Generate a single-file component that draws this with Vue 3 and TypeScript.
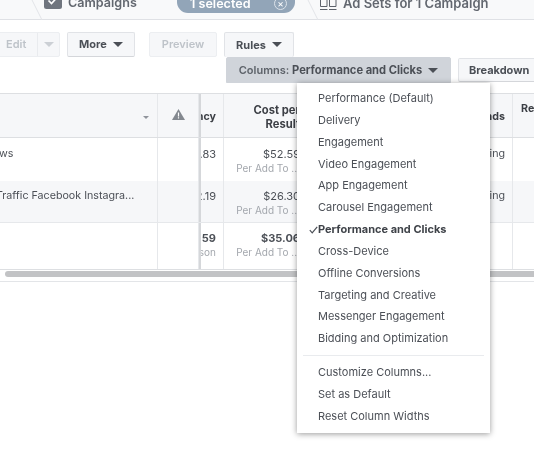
<script setup lang="ts">
const menuA = ['Performance (Default)', 'Delivery', 'Engagement', 'Video Engagement', 'App Engagement', 'Carousel Engagement', 'Performance and Clicks', 'Cross-Device', 'Offline Conversions', 'Targeting and Creative', 'Messenger Engagement', 'Bidding and Optimization']
const menuB = ['Customize Columns...', 'Set as Default', 'Reset Column Widths']
const rows = [
  { name: 'News', freq: '1.83', cost: '$52.59', sub: 'Per Add To ...', last: 'Learning', kind: 'first', note: '' },
  { name: 'Traffic Facebook Instagra...', freq: '2.19', cost: '$26.30', sub: 'Per Add To ...', last: 'Learning', kind: 'alt', note: '' },
  { name: '', freq: '1.59', cost: '$35.06', sub: 'Per Add To ...', last: '', kind: 'total', note: 'Per Person' },
]
</script>

<template>
  <div class="page">
    <div class="tabs">
      <div class="tab first">
        <svg class="check" width="18" height="14" viewBox="0 0 18 14"><rect x="0" y="-4" width="18" height="17" rx="2.5" fill="#6f757e"/><path d="M4.5 4.5l3 3 6-6.5" fill="none" stroke="#fff" stroke-width="1.6"/></svg>
        <span>Campaigns</span>
      </div>
      <div class="pill"><span>1 selected</span><i class="close">×</i></div>
      <div class="tab third">
        <svg width="17" height="11" viewBox="0 0 17 11"><path d="M.5 0v6.5h6.5V0M9.5 0v6.5h6.5V0" fill="none" stroke="#5c626b"/><path d="M0 9.5h7.5M9 9.5h7.5" stroke="#5c626b"/></svg>
        <span>Ad Sets for 1 Campaign</span>
      </div>
      <svg class="slash" width="12" height="20" viewBox="0 0 12 20"><path d="M1 0l10 20" stroke="#e2e4e8" fill="none"/></svg>
      <svg class="slash two" width="12" height="20" viewBox="0 0 12 20"><path d="M1 0l10 20" stroke="#e2e4e8" fill="none"/></svg>
    </div>

    <div class="toolbar">
      <div class="tools-left">
        <div class="btn off edit"><span>Edit</span><i class="split"><b class="caret faint"></b></i></div>
        <div class="btn more">More<b class="caret"></b></div>
        <div class="btn off preview">Preview</div>
      </div>
      <div class="tools-right">
        <div class="btn rules">Rules<b class="caret"></b></div>
        <div class="tools-row">
          <div class="btn columns">Columns:&nbsp;<strong>Performance and Clicks</strong><b class="caret"></b></div>
          <div class="btn breakdown">Breakdown<b class="caret"></b></div>
        </div>
      </div>
    </div>

    <div class="table">
      <div class="row head">
        <div class="cell name"><b class="sort"></b></div>
        <div class="cell warn">
          <svg width="13" height="11" viewBox="0 0 13 11"><path d="M6.5 0L13 11H0z" fill="#83888f"/><path d="M6.5 3.5v4M6.5 8.3v1.2" stroke="#fff" stroke-width="1.2"/></svg>
        </div>
        <div class="cell freq">Frequency</div>
        <div class="cell cost"><div>Cost per<br>Result</div></div>
        <div class="cell mid">Ends</div>
        <div class="cell last">Results</div>
      </div>
      <div v-for="r in rows" :key="r.cost" class="row body" :class="r.kind">
        <div class="cell name"><span>{{ r.name }}</span></div>
        <div class="cell warn"></div>
        <div class="cell freq"><div class="stack"><span class="val">{{ r.freq }}</span><span class="sub">{{ r.note }}</span></div></div>
        <div class="cell cost"><div class="stack"><span class="val">{{ r.cost }}</span><span class="sub">{{ r.sub }}</span></div></div>
        <div class="cell mid"><span>{{ r.last }}</span></div>
        <div class="cell last"></div>
      </div>
    </div>
    <div class="scroll"><div class="thumb"></div></div>

    <div class="menu">
      <div class="group">
        <div v-for="m in menuA" :key="m" class="item" :class="{ on: m === 'Performance and Clicks' }">
          <svg v-if="m === 'Performance and Clicks'" class="tick" width="9" height="8" viewBox="0 0 9 8"><path d="M.8 4.2l2.4 2.6L8.2.8" fill="none" stroke="#4b4f56" stroke-width="1.2"/></svg>
          {{ m }}
        </div>
      </div>
      <div class="sep"></div>
      <div class="group">
        <div v-for="m in menuB" :key="m" class="item">{{ m }}</div>
      </div>
    </div>
  </div>
</template>

<style>
html, body { margin: 0; background: #fff; }
</style>

<style scoped>
.page {
  position: relative;
  width: 534px;
  height: 462px;
  overflow: hidden;
  background: #fff;
  font-family: Inter, "Liberation Sans", sans-serif;
  font-size: 10.7px;
  color: #4b4f56;
  filter: blur(0.35px);
}
.tabs {
  position: relative;
  height: 20px;
  box-sizing: border-box;
  border-bottom: 1px solid #dfe1e5;
  background: #f8f9fa;
  display: flex;
  align-items: flex-end;
  font-size: 12.6px;
  font-weight: 600;
  color: #62676f;
  line-height: 14px;
}
.tab { display: flex; align-items: center; gap: 6px; height: 14px; margin-bottom: 9px; }
.tab.first { margin-left: 44px; width: 133px; }
.check { margin-top: -1px; }
.pill {
  width: 118px;
  height: 14px;
  margin-bottom: 6px;
  box-sizing: border-box;
  padding: 0 8px 3px 13px;
  background: #92a5b8;
  border-radius: 0 0 11px 11px;
  color: #fff;
  display: flex;
  justify-content: space-between;
  align-items: flex-end;
  line-height: 12px;
}
.close {
  width: 13px; height: 13px; box-sizing: border-box; border: 1px solid #dbe2e9; border-radius: 50%;
  font-style: normal; font-size: 10px; line-height: 11px; text-align: center; font-weight: 400;
}
.tab.third { margin-left: 25px; gap: 6px; font-size: 13px; }
.tab.third svg { margin-top: 5px; }
.slash { position: absolute; left: 31px; top: 0; }
.slash.two { left: 307px; }

.toolbar {
  height: 74px;
  box-sizing: border-box;
  border-bottom: 1px solid #dddfe2;
  display: flex;
  padding-top: 12px;
  font-weight: 600;
}
.tools-left { display: flex; align-items: flex-start; gap: 7px; margin-left: -5px; }
.tools-left .preview { margin-left: 7px; }
.tools-right { display: flex; flex-direction: column; align-items: flex-start; margin-left: 7px; }
.tools-row { display: flex; gap: 7px; margin-left: 2px; }
.btn {
  height: 25px;
  box-sizing: border-box;
  padding-bottom: 1px;
  display: flex;
  align-items: center;
  justify-content: center;
  border: 1px solid #e1e3e7;
  border-bottom-color: #d4d6da;
  border-radius: 2px;
  background: #f6f7f9;
  color: #4b4f56;
  white-space: nowrap;
  font-size: 11px;
  font-weight: 700;
}
.btn.off { background: #f6f7f9; color: #bec3c9; border-color: #eceef1; font-weight: 600; }
.edit { width: 65px; padding-left: 5px; justify-content: space-between; }
.edit span { margin-left: 5px; }
.split { width: 21px; height: 23px; border-left: 1px solid #e9ebee; display: flex; align-items: center; justify-content: center; }
.more { width: 68px; }
.preview { width: 68px; }
.rules { width: 70px; border-bottom: 0; height: 25px; }
.columns { width: 225px; height: 26px; padding: 0; background: #d0d4da; border-color: #d0d4da; border-radius: 2px 2px 0 0; font-weight: 600; color: #5d6269; }
.columns strong { font-weight: 700; color: #4b4f56; font-size: 11.15px; }
.breakdown { width: 90px; height: 24px; margin-top: 1px; justify-content: flex-start; padding: 0 0 0 10px; flex: none; }
.caret {
  display: inline-block;
  margin-left: 6px;
  border-left: 5px solid transparent;
  border-right: 5px solid transparent;
  border-top: 5px solid #4b4f56;
}
.caret.faint { margin: 0; border-top-color: #ccd0d5; }

.table { border-bottom: 1px solid #dddfe2; }
.row {
  display: grid;
  grid-template-columns: 158px 41px 25px 83px 206px 21px;
  width: 534px;
  overflow: hidden;
  box-sizing: border-box;
}
.row.head { height: 44px; background: #f6f7f9; font-weight: 700; color: #3c3f45; border-bottom: 1px solid #dddfe2; }
.row.first { height: 43px; }
.row.alt { background: #f6f7f9; height: 42px; border-bottom: 1px solid #e6e8eb; }
.row.total { height: 46px; }
.cell {
  box-sizing: border-box;
  overflow: hidden;
  border-right: 1px solid #e6e8eb;
  display: flex;
  justify-content: flex-end;
  white-space: nowrap;
}
.head .cell { align-items: center; line-height: 14px; padding-top: 2px; }
.body .cell { padding-top: 8px; line-height: 14px; }
.first .cell { padding-top: 9px; }
.name { padding-right: 8px; }
.head .cell.name { padding-top: 3px; }
.body .name { justify-content: flex-start; padding-right: 0; }
.first .name span { margin-left: -15px; }
.alt .name span { margin-left: -4px; }
.sort {
  border-left: 3px solid transparent;
  border-right: 3px solid transparent;
  border-top: 3px solid #90949c;
}
.warn { justify-content: center; }
.head .cell.warn { padding: 0 0 2px; }
.freq {
  border-left: 2px solid #d5d7da;
  padding-right: 7px;
}
.cost { padding-right: 6px; }
.head .cost { text-align: right; font-size: 11.2px; }
.mid { padding-right: 7px; }
.last { border-right: 0; justify-content: flex-start; padding-left: 8px; }
.head .cell.last { align-items: flex-start; padding-top: 8px; }
.stack { display: flex; flex-direction: column; align-items: flex-end; }
.val { font-size: 11px; }
.sub { color: #a3a7ad; font-size: 10px; line-height: 14px; }
.total .val { font-weight: 700; }

.scroll { height: 10px; padding-top: 1px; border-bottom: 1px solid #e3e5e8; }
.thumb { width: 534px; margin-left: 5px; height: 6px; border-radius: 3px; background: #c2c3c5; }

.menu {
  position: absolute;
  left: 297px;
  top: 83px;
  width: 193px;
  height: 350px;
  box-sizing: border-box;
  background: #fff;
  padding: 4px 0 5px;
  box-shadow: 0 1px 6px rgba(0, 0, 0, 0.4);
  display: flex;
  flex-direction: column;
  font-size: 11px;
  color: #4b4f56;
}
.item {
  position: relative;
  height: 21.85px;
  line-height: 22px;
  padding-left: 21px;
  white-space: nowrap;
}
.item.on { font-weight: 700; color: #3f4349; }
.tick { position: absolute; left: 12px; top: 8px; }
.sep { height: 1px; background: #e9ebee; margin: 6px 6px 5px; }
</style>
